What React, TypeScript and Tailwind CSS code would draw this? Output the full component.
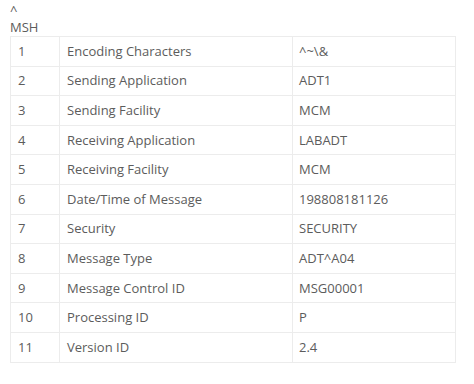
const rows: [string, string, string][] = [
  ["1", "Encoding Characters", "^~\\&"],
  ["2", "Sending Application", "ADT1"],
  ["3", "Sending Facility", "MCM"],
  ["4", "Receiving Application", "LABADT"],
  ["5", "Receiving Facility", "MCM"],
  ["6", "Date/Time of Message", "198808181126"],
  ["7", "Security", "SECURITY"],
  ["8", "Message Type", "ADT^A04"],
  ["9", "Message Control ID", "MSG00001"],
  ["10", "Processing ID", "P"],
  ["11", "Version ID", "2.4"],
];

export default function App() {
  return (
    <div
      className="w-[474px] h-[384px] bg-white pl-[10px] pt-[2px] text-[13px] leading-[17px] text-[#5c5c5c]"
      style={{ fontFamily: '"Open Sans", sans-serif' }}
    >
      <div>^</div>
      <div>MSH</div>
      <table className="border-collapse w-[445px] table-fixed">
        <colgroup>
          <col className="w-[49px]" />
          <col className="w-[233px]" />
          <col className="w-[163px]" />
        </colgroup>
        <tbody>
          {rows.map(([n, name, value]) => (
            <tr key={n}>
              <td className="border border-[#ececec] px-[7px] py-[5.8px]">{n}</td>
              <td className="border border-[#ececec] px-[7px] py-[5.8px]">{name}</td>
              <td className="border border-[#ececec] px-[6px] py-[5.8px]">{value}</td>
            </tr>
          ))}
        </tbody>
      </table>
    </div>
  );
}
